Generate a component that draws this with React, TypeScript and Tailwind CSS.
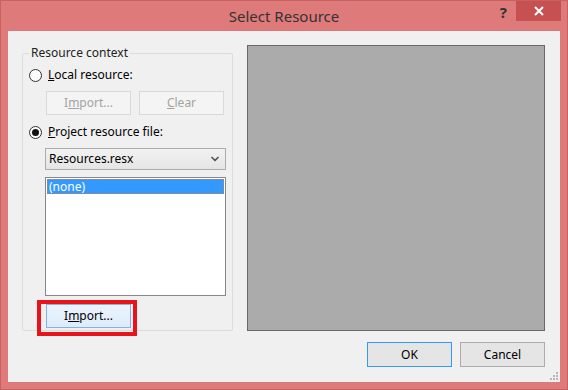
import { ChevronDown } from 'lucide-react'

function Radio({ checked }: { checked?: boolean }) {
  return (
    <span className="w-[13px] h-[13px] rounded-full border border-[#333] bg-[#fdfdfd] flex items-center justify-center">
      {checked && <span className="w-[7px] h-[7px] rounded-full bg-[#111]" />}
    </span>
  )
}

function Button({ children, className = '' }: { children: React.ReactNode; className?: string }) {
  return (
    <button
      className={`h-[24px] w-[85px] border flex items-center justify-center text-[12px] leading-none ${className}`}
    >
      {children}
    </button>
  )
}

export default function App() {
  return (
    <div className="w-[568px] h-[390px] bg-[#df7a7a] border border-[#c86262] flex flex-col font-['Noto_Sans',sans-serif] text-[12px] text-black">
      {/* title bar */}
      <div className="h-[30px] flex items-start">
        <div className="flex-1" />
        <div className="pt-[5px] text-[15px] leading-[20px] text-[#333]">Select Resource</div>
        <div className="flex-1 flex justify-end items-start">
          <span className="mt-[3px] mr-[9px] text-[15px] font-bold leading-[16px] text-[#333]">?</span>
          <button className="w-[45px] h-[20px] bg-[#c75050] mr-[6px] flex items-center justify-center">
            <svg width="10" height="10" viewBox="0 0 10 10">
              <path d="M1 1 L9 9 M9 1 L1 9" stroke="white" strokeWidth="2" />
            </svg>
          </button>
        </div>
      </div>

      {/* client area */}
      <div className="relative flex-1 mx-[7px] mb-[7px] bg-[#f0f0f0] flex flex-col pl-[14px] pt-[14px] pr-[15px]">
        <div className="flex items-start gap-[14px]">
          <fieldset className="w-[211px] h-[286px] border border-[#dcdcdc] rounded-[2px] px-[6px] m-0">
            <legend className="px-[2px] leading-[16px] text-[#222]">Resource context</legend>

            <div className="flex items-center gap-[6px] h-[16px] mt-[6px]">
              <Radio />
              <span>
                <u>L</u>ocal resource:
              </span>
            </div>

            <div className="flex gap-[8px] ml-[17px] mt-[8px]">
              <Button className="border-[#d9d9d9] bg-[#f4f4f4] text-[#a3a3a3]">
                I<u>m</u>port...
              </Button>
              <Button className="border-[#d9d9d9] bg-[#f4f4f4] text-[#a3a3a3]">
                <u>C</u>lear
              </Button>
            </div>

            <div className="flex items-center gap-[6px] h-[16px] mt-[9px]">
              <Radio checked />
              <span>
                <u>P</u>roject resource file:
              </span>
            </div>

            <div className="ml-[16px] mt-[8px] w-[181px] h-[22px] border border-[#acacac] bg-gradient-to-b from-[#f2f2f2] to-[#e5e5e5] flex items-center justify-between pl-[3px] pr-[4px]">
              <span>Resources.resx</span>
              <ChevronDown className="w-[12px] h-[12px] text-[#555]" strokeWidth={3.5} />
            </div>

            <div className="ml-[16px] mt-[7px] w-[181px] h-[119px] border border-[#828790] bg-white p-[1px]">
              <div className="h-[15px] bg-[#3399ff] border border-dotted border-[#d08030] text-white leading-[13px] pl-[1px]">
                (none)
              </div>
            </div>

            <div className="relative ml-[17px] mt-[8px] w-[85px]">
              <Button className="border-[#7eb4ea] bg-gradient-to-b from-[#ecf4fc] to-[#dcecfc] text-black">
                I<u>m</u>port...
              </Button>
              <div className="absolute -left-[9px] -top-[4px] w-[100px] h-[36px] border-4 border-[#e8141c]" />
            </div>
          </fieldset>

          <div className="w-[299px] h-[286px] border border-[#696969] bg-[#ababab]" />
        </div>

        <div className="flex justify-end gap-[8px] mt-[11px]">
          <Button className="h-[25px] border-[#3399ff] bg-[#e5e5e5]">OK</Button>
          <Button className="h-[25px] border-[#acacac] bg-[#e5e5e5]">Cancel</Button>
        </div>

        <svg className="absolute right-[2px] bottom-[2px]" width="8" height="8" viewBox="0 0 8 8">
          <rect x="6" y="0" width="2" height="2" fill="#b8b8b8" />
          <rect x="3" y="3" width="2" height="2" fill="#b8b8b8" />
          <rect x="6" y="3" width="2" height="2" fill="#b8b8b8" />
          <rect x="0" y="6" width="2" height="2" fill="#b8b8b8" />
          <rect x="3" y="6" width="2" height="2" fill="#b8b8b8" />
          <rect x="6" y="6" width="2" height="2" fill="#b8b8b8" />
        </svg>
      </div>
    </div>
  )
}
